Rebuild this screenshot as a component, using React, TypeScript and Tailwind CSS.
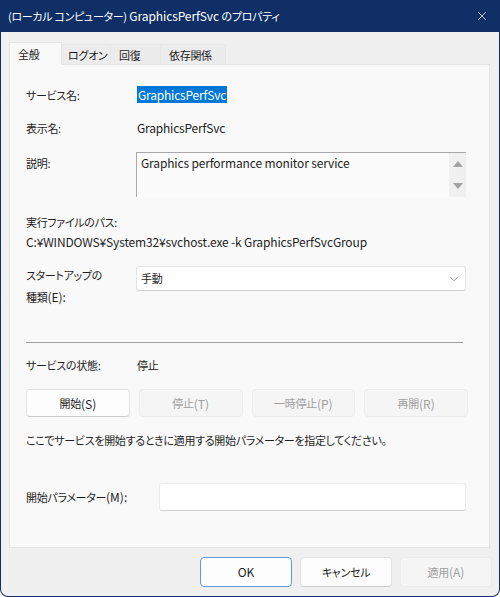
import type { ReactNode } from 'react';
import { X, ChevronDown } from 'lucide-react';

const font =
  "[font-family:'Noto_Sans_CJK_JP',sans-serif] [font-feature-settings:'palt']";

// Japanese runs: Yu Gothic UI sets kana/kanji narrower than Noto, so shrink a bit
function J({ children }: { children: ReactNode }) {
  return <span className="text-[11px] tracking-[-0.3px]">{children}</span>;
}

function Btn({
  label,
  disabled,
  primary,
}: {
  label: ReactNode;
  disabled?: boolean;
  primary?: boolean;
}) {
  return (
    <div
      className={
        'flex h-[30px] w-[92px] items-center justify-center rounded-[4px] border text-[12px] ' +
        (disabled
          ? 'border-[#ebebeb] bg-[#f5f5f5] text-[#a0a0a0]'
          : primary
            ? 'border-[#5b9bd5] bg-[#fdfdfd] text-[#1b1b1b]'
            : 'border-[#e2e2e2] border-b-[#cccccc] bg-[#fdfdfd] text-[#1b1b1b]')
      }
    >
      {label}
    </div>
  );
}

function SvcBtn({ label, disabled }: { label: ReactNode; disabled?: boolean }) {
  return (
    <div
      className={
        'flex h-[28px] flex-1 items-center justify-center rounded-[4px] border text-[12px] ' +
        (disabled
          ? 'border-[#ededed] bg-[#f5f5f5] text-[#a0a0a0]'
          : 'border-[#e2e2e2] border-b-[#cccccc] bg-[#fdfdfd] text-[#1b1b1b]')
      }
    >
      {label}
    </div>
  );
}

export default function App() {
  return (
    <div className={`h-[597px] w-[500px] bg-white ${font}`}>
      <div className="flex h-[597px] w-[500px] flex-col overflow-hidden rounded-b-[8px] border-x border-b border-[#0f2f66] bg-[#f0f0f0]">
        {/* title bar */}
        <div className="flex h-[32px] shrink-0 items-center justify-between bg-[#0f2f66] pl-[7px] pr-[10px] text-[12px] text-white">
          <span className="whitespace-nowrap tracking-[-0.1px]">
            <J>(ローカル コンピューター)</J> GraphicsPerfSvc <J>のプロパティ</J>
          </span>
          <X size={14} strokeWidth={1.25} className="text-white" />
        </div>

        {/* tabs */}
        <div className="mt-[10px] flex h-[23px] items-end whitespace-nowrap pl-[8px] text-[12px] text-[#1b1b1b]">
          <div className="relative z-10 flex h-[23px] w-[53px] items-center border-x border-t border-[#e5e5e5] bg-[#f9f9f9] pl-[8px]">
            <J>全般</J>
          </div>
          <div className="flex h-[21px] w-[49px] items-center border-t border-r border-[#e8e8e8] bg-[#ececec] pl-[6px]">
            <J>ログオン</J>
          </div>
          <div className="flex h-[21px] w-[50px] items-center border-t border-r border-[#e8e8e8] bg-[#ececec] pl-[8px]">
            <J>回復</J>
          </div>
          <div className="flex h-[21px] w-[65px] items-center border-t border-r border-[#e8e8e8] bg-[#ececec] pl-[8px]">
            <J>依存関係</J>
          </div>
        </div>

        {/* panel */}
        <div className="-mt-px ml-[8px] flex h-[484px] w-[481px] flex-col whitespace-nowrap border border-[#e5e5e5] bg-[#f9f9f9] pl-[16px] pt-[21px] text-[12px] leading-[17px] text-[#1e1e1e]">
          <div className="flex h-[17px]">
            <div className="w-[111px]">
              <J>サービス名:</J>
            </div>
            <div className="bg-[#0078d7] px-px tracking-[-0.2px] text-white">GraphicsPerfSvc</div>
          </div>

          <div className="mt-[16px] flex h-[17px]">
            <div className="w-[111px]">
              <J>表示名:</J>
            </div>
            <div className="tracking-[-0.2px]">GraphicsPerfSvc</div>
          </div>

          <div className="mt-[16px] flex">
            <div className="w-[110px] pt-[2px]">
              <J>説明:</J>
            </div>
            <div className="flex h-[45px] w-[330px] border-l border-t border-[#a8a8a8] bg-[#fbfbfb]">
              <div className="flex-1 pl-[4px] pt-[1px] tracking-[-0.15px]">
                Graphics performance monitor service
              </div>
              <div className="flex w-[17px] flex-col items-center justify-between bg-[#f0f0f0] py-[8px]">
                <svg width="10" height="6" viewBox="0 0 10 6">
                  <path d="M0 6 L5 0 L10 6 Z" fill="#a3a3a3" />
                </svg>
                <svg width="10" height="6" viewBox="0 0 10 6">
                  <path d="M0 0 L10 0 L5 6 Z" fill="#a3a3a3" />
                </svg>
              </div>
            </div>
          </div>

          <div className="mt-[16px] h-[17px]">
            <J>実行ファイルのパス:</J>
          </div>
          <div className="mt-[3px] h-[17px] tracking-[-0.15px]">
            C:¥WINDOWS¥System32¥svchost.exe -k GraphicsPerfSvcGroup
          </div>

          <div className="mt-[14px] flex h-[44px] items-start">
            <div className="w-[110px] leading-[22px]">
              <J>スタートアップの</J>
              <br />
              <J>種類</J>(E):
            </div>
            <div className="mt-[2px] flex h-[25px] w-[330px] items-center justify-between rounded-[3px] border border-[#e3e3e3] border-b-[#d0d0d0] bg-white pl-[4px] pr-[4px]">
              <J>手動</J>
              <ChevronDown size={14} strokeWidth={1.25} className="text-[#6b6b6b]" />
            </div>
          </div>

          <div className="mt-[34px] h-px w-[437px] bg-[#a0a0a0]" />

          <div className="mt-[13px] flex h-[17px]">
            <div className="w-[111px]">
              <J>サービスの状態:</J>
            </div>
            <div>
              <J>停止</J>
            </div>
          </div>

          <div className="mt-[16px] flex w-[442px] gap-[9px]">
            <SvcBtn label={<><J>開始</J>(S)</>} />
            <SvcBtn label={<><J>停止</J>(T)</>} disabled />
            <SvcBtn label={<><J>一時停止</J>(P)</>} disabled />
            <SvcBtn label={<><J>再開</J>(R)</>} disabled />
          </div>

          <div className="mt-[14px] h-[17px]">
            <J>ここでサービスを開始するときに適用する開始パラメーターを指定してください。</J>
          </div>

          <div className="mt-[35px] flex h-[28px] items-center">
            <div className="w-[133px]">
              <J>開始パラメーター</J>(M):
            </div>
            <div className="h-[28px] w-[307px] rounded-[3px] border border-[#ececec] border-b-[#cfcfcf] bg-white" />
          </div>
        </div>

        {/* dialog buttons */}
        <div className="mt-[9px] flex justify-end gap-[8px] pr-[7px]">
          <Btn label="OK" primary />
          <Btn label={<J>キャンセル</J>} />
          <Btn label={<><J>適用</J>(A)</>} disabled />
        </div>
      </div>
    </div>
  );
}
